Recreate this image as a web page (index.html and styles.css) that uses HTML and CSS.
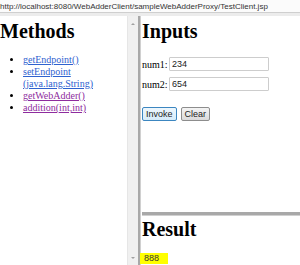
FILE: index.html
```html
<!DOCTYPE html>
<html lang="en">
<head>
    <meta charset="UTF-8">
    <title>TestClient</title>
    <link rel="stylesheet" href="styles.css">
</head>
<body>
<div class="addr">http://localhost:8080/WebAdderClient/sampleWebAdderProxy/TestClient.jsp</div>

<div class="frames">
    <div class="left">
        <h1>Methods</h1>
        <ul>
            <li><a href="#" class="link">getEndpoint()</a></li>
            <li><a href="#" class="link">setEndpoint (java.lang.String)</a></li>
            <li><a href="#" class="link visited">getWebAdder()</a></li>
            <li><a href="#" class="link visited">addition(int,int)</a></li>
        </ul>
    </div>
    <div class="vscroll">
        <span class="arrow up"></span>
        <span class="arrow down"></span>
    </div>
    <div class="frame-border"></div>
    <div class="right">
        <div class="inputs">
            <h1>Inputs</h1>
            <div class="row">
                <label for="num1">num1:</label>
                <input type="text" id="num1" value="234"/>
            </div>
            <div class="row">
                <label for="num2">num2:</label>
                <input type="text" id="num2" value="654"/>
            </div>
            <div class="buttons">
                <button class="invoke">Invoke</button>
                <button class="clear">Clear</button>
            </div>
        </div>
        <div class="hdivider"></div>
        <div class="result">
            <h1>Result</h1>
            <div class="answer">888</div>
        </div>
    </div>
</div>
</body>
</html>
```

FILE: styles.css
```css
* {
    box-sizing: border-box;
}

body {
    margin: 0;
    height: 265px;
    overflow: hidden;
    background: #fff;
    display: flex;
    flex-direction: column;
    font-family: 'Liberation Serif', serif;
}

.addr {
    height: 16px;
    flex: none;
    padding: 1px 0 0 0;
    font-family: 'Liberation Sans', sans-serif;
    font-size: 8px;
    line-height: 12px;
    color: #333;
    white-space: nowrap;
    background: #fbfbfb;
    border-bottom: 3px solid #ececec;
    box-shadow: inset 0 -1px 0 #cfcfcf;
}

.frames {
    flex: 1;
    display: flex;
    flex-direction: row;
    min-height: 0;
}

h1 {
    font-size: 20px;
    line-height: 22px;
    font-weight: bold;
    margin: 4px 0 0 0;
    color: #000;
}

.left {
    width: 127px;
    flex: none;
}

ul {
    margin: 12px 0 0 0;
    padding-left: 23px;
    font-size: 10px;
    line-height: 12px;
    color: #000;
}

li::marker {
    color: #000;
}

.link {
    color: #2f62cf;
}

.link.visited {
    color: #8e2c9e;
}

.vscroll {
    width: 11px;
    flex: none;
    background: #f0f0f0;
    border-left: 1px solid #e6e6e6;
    display: flex;
    flex-direction: column;
    justify-content: space-between;
    align-items: center;
    padding: 7px 0 6px 0;
}

.arrow {
    width: 0;
    height: 0;
    border-left: 2px solid transparent;
    border-right: 2px solid transparent;
}

.arrow.up {
    border-bottom: 2px solid #a0a0a0;
}

.arrow.down {
    border-top: 2px solid #a0a0a0;
}

.frame-border {
    width: 3px;
    flex: none;
    background: #a8a8a8;
    border-right: 1px solid #d0d0d0;
}

.right {
    flex: 1;
    display: flex;
    flex-direction: column;
    padding-left: 1px;
}

.inputs {
    height: 196px;
    flex: none;
}

.inputs h1 {
    margin-bottom: 12px;
}

.row {
    display: flex;
    flex-direction: row;
    align-items: center;
    height: 20px;
}

label {
    font-size: 10px;
    width: 27px;
}

input {
    width: 100px;
    height: 14px;
    border: 1px solid #cdcdcd;
    border-radius: 1px;
    padding: 0 2px;
    font-family: 'Liberation Sans', sans-serif;
    font-size: 9px;
    color: #222;
}

.buttons {
    display: flex;
    flex-direction: row;
    gap: 4px;
    margin-top: 13px;
}

button {
    height: 14px;
    padding: 0 3px;
    font-family: 'Liberation Sans', sans-serif;
    font-size: 9px;
    line-height: 12px;
    color: #222;
    border-radius: 2px;
    margin: 0;
}

.invoke {
    border: 1px solid #3c86c0;
    background: linear-gradient(#eef7fd, #d6ecfa);
}

.clear {
    border: 1px solid #8d8d8d;
    background: linear-gradient(#f4f4f4, #dadada);
}

.hdivider {
    height: 4px;
    flex: none;
    background: #a8a8a8;
    border-bottom: 1px solid #d0d0d0;
}

.result {
    flex: 1;
}

.result h1 {
    margin-top: 2px;
    margin-bottom: 13px;
}

.answer {
    margin-left: -2px;
    width: 28px;
    height: 11px;
    padding-left: 4px;
    background: #ffff00;
    font-family: 'Liberation Sans', sans-serif;
    font-size: 9px;
    line-height: 11px;
    color: #333;
}
```
